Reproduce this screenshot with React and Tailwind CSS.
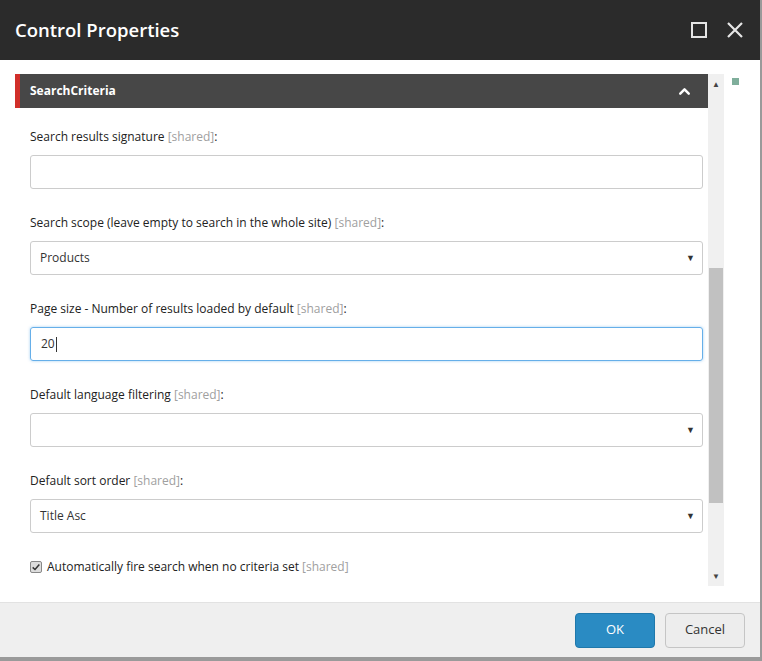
import { ChevronUp } from 'lucide-react';

const font = { fontFamily: '"Open Sans", "Noto Sans", sans-serif' };

function Label({ text }) {
  return (
    <div className="text-[12px] text-[#222] leading-[18px] mb-[9px]">
      {text} <span className="text-[#a0a0a0]">[shared]</span>:
    </div>
  );
}

function TextField({ value, focused }) {
  return (
    <div
      className={
        'h-[34px] rounded-[3px] border flex items-center px-[10px] text-[12px] text-[#333] ' +
        (focused ? 'border-[#66afe9] shadow-[0_0_3px_rgba(102,175,233,0.6)]' : 'border-[#ccc]')
      }
    >
      {value}
      {focused && <span className="inline-block w-px h-[15px] bg-[#333] ml-px" />}
    </div>
  );
}

function SelectField({ value }) {
  return (
    <div className="h-[34px] rounded-[3px] border border-[#ccc] flex items-center justify-between pl-[9px] pr-[7px] text-[12px] text-[#333]">
      <span>{value}</span>
      <span className="text-[9px] text-[#333]">▼</span>
    </div>
  );
}

function Field({ label, children }) {
  return (
    <div className="mb-[25px]">
      <Label text={label} />
      {children}
    </div>
  );
}

export default function App() {
  return (
    <div className="w-[762px] h-[661px] bg-[#9a9a9a] flex" style={font}>
      <div className="w-[760px] h-[657px] bg-white flex flex-col">
        {/* Header */}
        <div className="h-[60px] bg-[#2b2b2b] flex items-center justify-between pl-[15px] pr-[17px] shrink-0">
          <h1 className="text-white text-[18.5px] font-semibold">Control Properties</h1>
          <div className="flex items-center gap-[20px]">
            <svg viewBox="0 0 16 16" className="w-[16px] h-[16px]">
              <rect x="1" y="1" width="14" height="14" fill="none" stroke="#e6e6e6" strokeWidth="2" />
            </svg>
            <svg viewBox="0 0 16 16" className="w-[16px] h-[16px]">
              <path d="M1 1 L15 15 M15 1 L1 15" fill="none" stroke="#e6e6e6" strokeWidth="2.2" />
            </svg>
          </div>
        </div>

        {/* Body */}
        <div className="flex-1 flex pt-[14px] pl-[15px] pb-[16px] overflow-hidden">
          <div className="w-[693px] flex flex-col overflow-hidden">
            <div className="h-[34px] bg-[#474747] border-l-[5px] border-[#d12f2a] flex items-center justify-between pl-[10px] pr-[15px] shrink-0">
              <span className="text-white text-[12px] font-bold">SearchCriteria</span>
              <ChevronUp className="w-[17px] h-[17px] text-white" strokeWidth={3.5} />
            </div>
            <div className="pl-[15px] pr-[5px] pt-[20px]">
              <Field label="Search results signature">
                <TextField value="" />
              </Field>
              <Field label="Search scope (leave empty to search in the whole site)">
                <SelectField value="Products" />
              </Field>
              <Field label="Page size - Number of results loaded by default">
                <TextField value="20" focused />
              </Field>
              <Field label="Default language filtering">
                <SelectField value="" />
              </Field>
              <Field label="Default sort order">
                <SelectField value="Title Asc" />
              </Field>
              <label className="flex items-center gap-[5px] text-[12px] leading-[18px] text-[#222]">
                <span className="w-[12px] h-[12px] rounded-[2px] border border-[#888] bg-[#ddd] flex items-center justify-center">
                  <svg viewBox="0 0 12 12" className="w-[10px] h-[10px]">
                    <path d="M2 6.5 L4.8 9 L10 3" fill="none" stroke="#333" strokeWidth="1.8" />
                  </svg>
                </span>
                <span>
                  Automatically fire search when no criteria set <span className="text-[#a0a0a0]">[shared]</span>
                </span>
              </label>
            </div>
          </div>

          {/* Scrollbar */}
          <div className="w-[16px] bg-[#f0f0f0] flex flex-col items-center justify-between py-[6px]">
            <span className="text-[8px] text-[#444] leading-none">▲</span>
            <div className="flex-1 w-full flex flex-col pt-[180px] pb-[69px] px-px">
              <div className="flex-1 bg-[#c1c1c1]" />
            </div>
            <span className="text-[8px] text-[#444] leading-none">▼</span>
          </div>

          <div className="pl-[8px] pt-[4px]">
            <div className="w-[7px] h-[7px] bg-[#7fae9b]" />
          </div>
        </div>

        {/* Footer */}
        <div className="h-[55px] bg-[#efefef] border-t border-[#e2e2e2] flex items-center justify-end gap-[10px] pr-[15px] shrink-0">
          <button className="w-[80px] h-[35px] rounded-[4px] bg-[#2a8bc3] border border-[#1f78ab] text-white text-[13px]">
            OK
          </button>
          <button className="w-[80px] h-[35px] rounded-[4px] bg-[#ededed] border border-[#c5c5c5] text-[#333] text-[13px]">
            Cancel
          </button>
        </div>
      </div>
    </div>
  );
}
